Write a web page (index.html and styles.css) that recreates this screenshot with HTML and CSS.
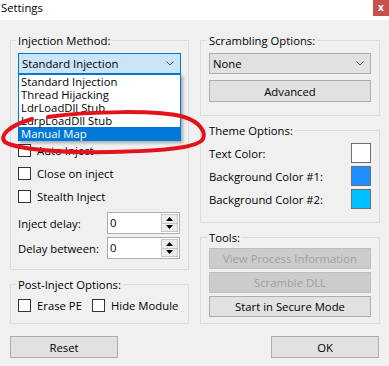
FILE: index.html
```html
<!DOCTYPE html>
<html lang="en">
<head>
    <meta charset="UTF-8">
    <meta name="viewport" content="width=device-width, initial-scale=1.0">
    <title>Settings</title>
    <link rel="stylesheet" href="styles.css">
</head>
<body>

<div class="window">
    <div class="titlebar">
        <span class="title">Settings</span>
        <span class="close">x</span>
    </div>

    <div class="columns">
        <div class="col">
            <div class="group group-inject">
                <div class="group-title">Injection Method:</div>
                <div class="combo-wrap">
                    <div class="combo combo-focus">
                        <span>Standard Injection</span>
                        <svg class="chevron" width="8" height="5" viewBox="0 0 8 5"><polyline points="0.5,0.5 4,4 7.5,0.5" fill="none" stroke="#555" stroke-width="1"/></svg>
                    </div>
                    <ul class="dropdown">
                        <li>Standard Injection</li>
                        <li>Thread Hijacking</li>
                        <li>LdrLoadDll Stub</li>
                        <li>LdrpLoadDll Stub</li>
                        <li class="selected">Manual Map</li>
                    </ul>
                </div>

                <div class="check-list">
                    <div class="check"><span class="box"></span>Auto Inject</div>
                    <div class="check"><span class="box"></span>Close on inject</div>
                    <div class="check"><span class="box"></span>Stealth Inject</div>
                </div>

                <div class="spin-list">
                    <div class="spin-row">
                        <span class="spin-label">Inject delay:</span>
                        <div class="spinner">
                            <span class="spin-value">0</span>
                            <div class="spin-buttons">
                                <span class="spin-btn"><svg width="7" height="4" viewBox="0 0 7 4"><polygon points="3.5,0 7,4 0,4" fill="#000"/></svg></span>
                                <span class="spin-btn"><svg width="7" height="4" viewBox="0 0 7 4"><polygon points="0,0 7,0 3.5,4" fill="#000"/></svg></span>
                            </div>
                        </div>
                    </div>
                    <div class="spin-row">
                        <span class="spin-label">Delay between:</span>
                        <div class="spinner">
                            <span class="spin-value">0</span>
                            <div class="spin-buttons">
                                <span class="spin-btn"><svg width="7" height="4" viewBox="0 0 7 4"><polygon points="3.5,0 7,4 0,4" fill="#000"/></svg></span>
                                <span class="spin-btn"><svg width="7" height="4" viewBox="0 0 7 4"><polygon points="0,0 7,0 3.5,4" fill="#000"/></svg></span>
                            </div>
                        </div>
                    </div>
                </div>
            </div>

            <div class="group group-post">
                <div class="group-title">Post-Inject Options:</div>
                <div class="post-row">
                    <div class="check check-erase"><span class="box"></span>Erase PE</div>
                    <div class="check"><span class="box"></span>Hide Module</div>
                </div>
            </div>
        </div>

        <div class="col">
            <div class="group group-scramble">
                <div class="group-title">Scrambling Options:</div>
                <div class="combo">
                    <span>None</span>
                    <svg class="chevron" width="8" height="5" viewBox="0 0 8 5"><polyline points="0.5,0.5 4,4 7.5,0.5" fill="none" stroke="#555" stroke-width="1"/></svg>
                </div>
                <button class="btn btn-advanced">Advanced</button>
            </div>

            <div class="group group-theme">
                <div class="group-title">Theme Options:</div>
                <div class="swatch-list">
                    <div class="swatch-row"><span>Text Color:</span><span class="swatch swatch-white"></span></div>
                    <div class="swatch-row"><span>Background Color #1:</span><span class="swatch swatch-blue"></span></div>
                    <div class="swatch-row"><span>Background Color #2:</span><span class="swatch swatch-sky"></span></div>
                </div>
            </div>

            <div class="group group-tools">
                <div class="group-title">Tools:</div>
                <div class="tool-list">
                    <button class="btn" disabled>View Process Information</button>
                    <button class="btn" disabled>Scramble DLL</button>
                    <button class="btn">Start in Secure Mode</button>
                </div>
            </div>
        </div>
    </div>

    <div class="footer">
        <button class="btn btn-footer">Reset</button>
        <button class="btn btn-footer">OK</button>
    </div>

    <svg class="annotation" width="389" height="366" viewBox="0 0 389 366">
        <path d="M 48 117 C 90 111, 160 110, 184 117 C 200 122, 206 132, 203 139 C 198 147, 170 151, 110 152 C 60 153, 15 149, 5 142 C -1 136, 8 126, 32 119"
              fill="none" stroke="#e3121b" stroke-width="4" stroke-linecap="round"/>
    </svg>
</div>

</body>
</html>
```

FILE: styles.css
```css
body {
    margin: 0;
    background-color: #f0f0f0;
    font-family: "Open Sans", Arial, sans-serif;
    font-size: 11.3px;
    color: #000;
}
.window {
    position: relative;
    width: 389px;
    height: 366px;
    overflow: hidden;
    background-color: #f0f0f0;
}
.titlebar {
    height: 20px;
    background-color: #fff;
    display: flex;
    justify-content: space-between;
    align-items: flex-start;
}
.title {
    padding-left: 1px;
    line-height: 16px;
}
.close {
    width: 16px;
    height: 16px;
    background-color: #c75050;
    color: #fff;
    font-weight: bold;
    font-size: 10px;
    line-height: 15px;
    text-align: center;
}
.columns {
    display: grid;
    grid-template-columns: 179px 180px;
    column-gap: 11px;
    padding: 20px 0 0 10px;
}
.col {
    display: flex;
    flex-direction: column;
    gap: 14px;
}
.group {
    border: 1px solid #dcdcdc;
    display: flex;
    flex-direction: column;
}
.group-title {
    align-self: flex-start;
    margin: -8px 0 0 -2px;
    padding: 0 2px;
    line-height: 16px;
    background-color: #f0f0f0;
    white-space: nowrap;
}
.group-inject {
    padding: 0 7px 10px 7px;
}
.group-post {
    padding: 0 7px 11px 7px;
}
.group-scramble {
    padding: 0 8px 13px 8px;
}
.group-theme {
    padding: 0 8px 13px 8px;
}
.group-tools {
    padding: 0 8px 6px 8px;
}

/* combo boxes */
.combo-wrap {
    position: relative;
    margin-top: 4px;
}
.combo {
    box-sizing: border-box;
    height: 21px;
    border: 1px solid #adadad;
    background-color: #e1e1e1;
    display: flex;
    justify-content: space-between;
    align-items: center;
    padding: 0 6px 0 3px;
    line-height: 16px;
}
.group-scramble .combo {
    margin-top: 4px;
}
.combo-focus {
    border-color: #0078d7;
    background-color: #cce4f7;
}
.dropdown {
    position: absolute;
    top: 100%;
    left: 0;
    right: 0;
    z-index: 5;
    margin: 0;
    padding: 0;
    list-style: none;
    background-color: #fff;
    border: 1px solid #0078d7;
    box-shadow: 2px 2px 3px rgba(0, 0, 0, 0.3);
}
.dropdown li {
    height: 13px;
    line-height: 13px;
    padding-left: 2px;
    white-space: nowrap;
}
.dropdown .selected {
    background-color: #0078d7;
    color: #fff;
}

/* check boxes */
.check-list {
    margin-top: 70px;
    display: flex;
    flex-direction: column;
    gap: 10px;
}
.check {
    display: flex;
    align-items: center;
    gap: 6px;
    height: 13px;
    line-height: 13px;
    white-space: nowrap;
}
.box {
    box-sizing: border-box;
    width: 13px;
    height: 13px;
    border: 1px solid #333;
    background-color: #fff;
}
.post-row {
    margin-top: 6px;
    display: flex;
}
.check-erase {
    width: 74px;
}

/* spinners */
.spin-list {
    margin-top: 9px;
    display: flex;
    flex-direction: column;
    gap: 3px;
}
.spin-row {
    display: flex;
    align-items: center;
}
.spin-label {
    width: 89px;
}
.spinner {
    box-sizing: border-box;
    width: 73px;
    height: 22px;
    border: 1px solid #adadad;
    background-color: #fff;
    display: flex;
    justify-content: space-between;
    padding: 1px;
}
.spin-value {
    padding-left: 1px;
    line-height: 17px;
}
.spin-buttons {
    display: flex;
    flex-direction: column;
    width: 15px;
    border: 1px solid #c4c4c4;
}
.spin-btn {
    flex: 1;
    display: flex;
    align-items: center;
    justify-content: center;
    background-color: #ececec;
}
.spin-btn + .spin-btn {
    border-top: 1px solid #c4c4c4;
}

/* buttons */
.btn {
    box-sizing: border-box;
    height: 21px;
    border: 1px solid #adadad;
    background-color: #e1e1e1;
    font-family: inherit;
    font-size: inherit;
    color: #000;
    padding: 0;
}
.btn[disabled] {
    background-color: #cccccc;
    border-color: #bfbfbf;
    color: #a0a0a0;
}
.btn-advanced {
    margin-top: 6px;
    height: 22px;
}

/* theme colours */
.swatch-list {
    margin-top: 4px;
    display: flex;
    flex-direction: column;
    gap: 3px;
}
.swatch-row {
    display: flex;
    justify-content: space-between;
    align-items: center;
    height: 20px;
}
.swatch {
    box-sizing: border-box;
    width: 20px;
    height: 20px;
    border: 1px solid #6d6d6d;
}
.swatch-white {
    background-color: #fff;
}
.swatch-blue {
    background-color: #1e90ff;
}
.swatch-sky {
    background-color: #00bfff;
}

.tool-list {
    margin-top: 2px;
    display: flex;
    flex-direction: column;
    gap: 3px;
}

.footer {
    display: flex;
    justify-content: space-between;
    padding: 12px 10px 0 10px;
}
.btn-footer {
    width: 108px;
    height: 22px;
}

.annotation {
    position: absolute;
    top: 0;
    left: 0;
    z-index: 10;
    pointer-events: none;
}
```
